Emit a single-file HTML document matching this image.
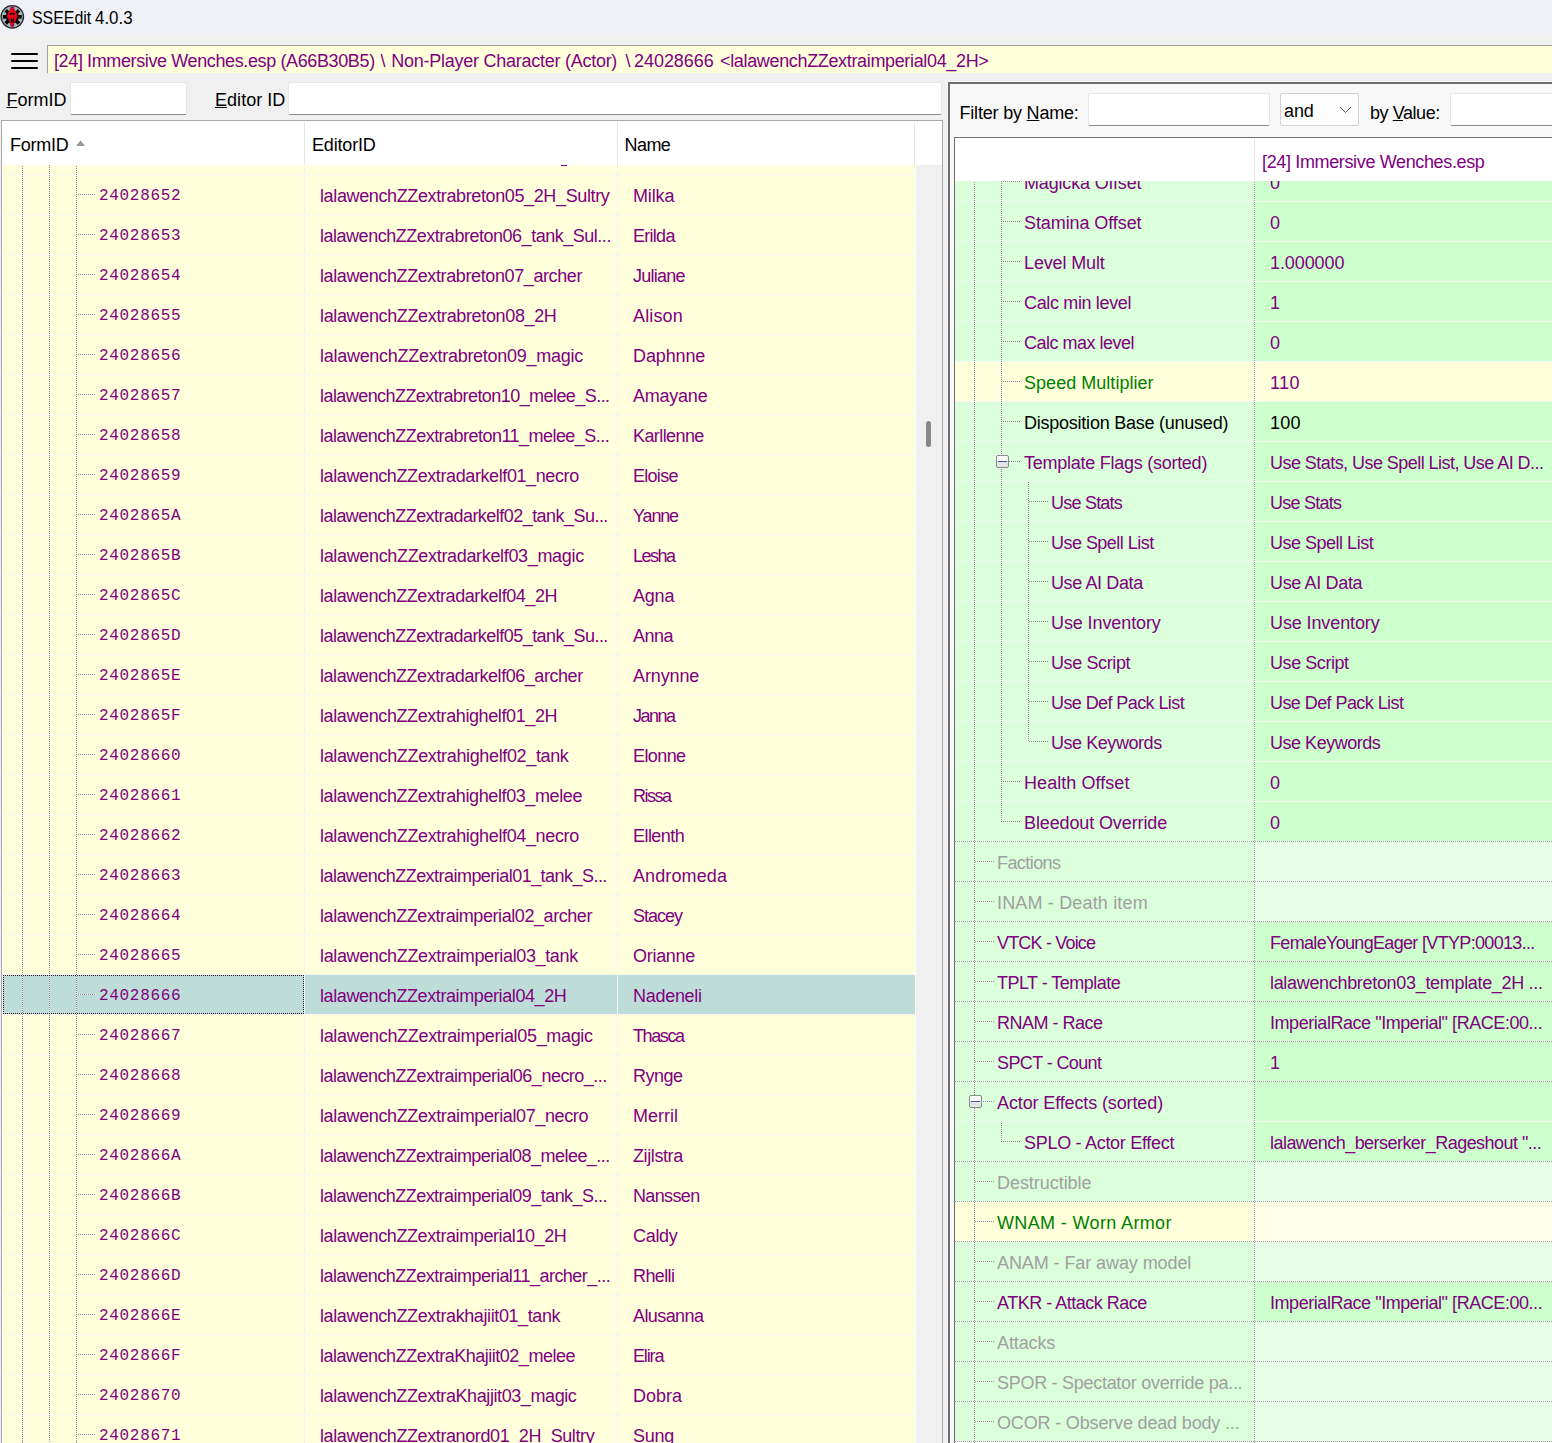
<!DOCTYPE html><html><head><meta charset="utf-8"><style>
html,body{margin:0;padding:0;}
body{width:1552px;height:1443px;overflow:hidden;position:relative;background:#f0f0f0;font-family:'Liberation Sans', sans-serif;}
.t{position:absolute;white-space:pre;line-height:20px;height:20px;}
.t u{text-decoration:underline;text-underline-offset:1px;text-decoration-thickness:1px;}
.vd{position:absolute;width:1px;background-image:linear-gradient(to bottom,var(--c) 50%,#fff 50%);background-size:1px 2px;}
.hd{position:absolute;height:1px;background-image:linear-gradient(to right,var(--c) 50%,#fff 50%);background-size:2px 1px;}
.clip{position:absolute;overflow:hidden;}
</style></head><body>
<div style="position:absolute;left:0px;top:0px;width:1552px;height:34px;background:#f0f1f7;"></div>
<svg style="position:absolute;left:0;top:0" width="30" height="34" viewBox="0 0 30 34">
<circle cx="12.3" cy="16.8" r="11.2" fill="#a4b5b9" stroke="#262626" stroke-width="1.3"/>
<g fill="#000" transform="translate(12.3 16.8)">
<circle r="6.6"/>
<rect x="-1.8" y="-9.4" width="3.6" height="18.8"/>
<rect x="-9.4" y="-1.8" width="18.8" height="3.6"/>
<rect x="-1.8" y="-9.4" width="3.6" height="18.8" transform="rotate(45)"/>
<rect x="-1.8" y="-9.4" width="3.6" height="18.8" transform="rotate(-45)"/>
</g>
<path d="M12.3 5.6 L14.6 9.5 L16.8 13.5 L17.6 16.5 L15.6 20.5 L13.8 24.5 L12.3 28.4 L10.8 24.5 L9 20.5 L7 16.5 L7.8 13.5 L10 9.5 Z" fill="#f0001a"/>
<path d="M12.3 5.6 L14.6 9.5 L13.2 9.8 L12.3 7.6 L11.4 9.8 L10 9.5 Z M10.8 24.5 L13.8 24.5 L12.3 28.4 Z" fill="#b0104a"/>
<path d="M9.5 14.2 Q11 11.8 12.3 13.6 Q13.6 11.8 15.1 14.2 L13.6 14.8 L12.3 14 L11 14.8 Z M10.2 18.6 L11.8 18.4 L12.3 22.5 L12.8 18.4 L14.4 18.6 L13.2 22.8 L11.4 22.8 Z" fill="#000"/>
</svg>
<div class="t" style="left:32px;top:8.30px;color:#000000;font-size:18px;transform:scaleX(0.8836);transform-origin:0 0;">SSEEdit</div>
<div class="t" style="left:94.5px;top:8.30px;color:#000000;font-size:18px;transform:scaleX(0.9400);transform-origin:0 0;">4.0.3</div>
<div style="position:absolute;left:11px;top:53px;width:27px;height:2px;background:#000;border-radius:1px;"></div>
<div style="position:absolute;left:11px;top:60px;width:27px;height:2px;background:#000;border-radius:1px;"></div>
<div style="position:absolute;left:11px;top:67px;width:27px;height:2px;background:#000;border-radius:1px;"></div>
<div style="position:absolute;left:47px;top:45px;width:1505px;height:28px;background:#ffffdc;box-sizing:border-box;border-top:1px solid #a0a0a0;border-left:1px solid #a0a0a0;"></div>
<div class="t" style="left:54px;top:50.70px;color:#800080;font-size:18px;letter-spacing:-0.38055555555555526px;font-family:'Liberation Sans', sans-serif;">[24] Immersive Wenches.esp (A66B30B5)</div>
<div class="t" style="left:380.5px;top:50.70px;color:#800080;font-size:18px;letter-spacing:0px;font-family:'Liberation Sans', sans-serif;">\</div>
<div class="t" style="left:391.3px;top:50.70px;color:#800080;font-size:18px;letter-spacing:-0.25925925925925924px;font-family:'Liberation Sans', sans-serif;">Non-Player Character (Actor)</div>
<div class="t" style="left:625.5px;top:50.70px;color:#800080;font-size:18px;letter-spacing:0px;font-family:'Liberation Sans', sans-serif;">\</div>
<div class="t" style="left:634px;top:50.70px;color:#800080;font-size:18px;letter-spacing:-0.0428571428571526px;font-family:'Liberation Sans', sans-serif;">24028666</div>
<div class="t" style="left:720px;top:50.70px;color:#800080;font-size:18px;letter-spacing:-0.3433333333333356px;font-family:'Liberation Sans', sans-serif;">&lt;lalawenchZZextraimperial04_2H&gt;</div>
<div class="t" style="left:6.5px;top:90.20px;color:#000000;font-size:18px;letter-spacing:-0.020000000000001704px;font-family:'Liberation Sans', sans-serif;"><u>F</u>ormID</div>
<div style="position:absolute;left:70px;top:82px;width:117px;height:33px;background:#fff;box-sizing:border-box;border:1px solid #e6e6e6;border-bottom:1px solid #8a8a8a;border-radius:2px;"></div>
<div class="t" style="left:215px;top:90.20px;color:#000000;font-size:18px;letter-spacing:0.03750000000000142px;font-family:'Liberation Sans', sans-serif;"><u>E</u>ditor ID</div>
<div style="position:absolute;left:288px;top:82px;width:654px;height:33px;background:#fff;box-sizing:border-box;border:1px solid #e6e6e6;border-bottom:1px solid #8a8a8a;border-radius:2px;"></div>
<div style="position:absolute;left:1px;top:120px;width:942px;height:1333px;background:#fff;box-sizing:border-box;border:1px solid #a8a8b0;"></div>
<div style="position:absolute;left:304px;top:122px;width:1px;height:43px;background:#e5e5e5;"></div>
<div style="position:absolute;left:617px;top:122px;width:1px;height:43px;background:#e5e5e5;"></div>
<div style="position:absolute;left:914px;top:122px;width:1px;height:43px;background:#e5e5e5;"></div>
<div class="t" style="left:10px;top:134.70px;color:#000000;font-size:18px;letter-spacing:-0.24000000000000057px;font-family:'Liberation Sans', sans-serif;">FormID</div>
<svg style="position:absolute;left:76px;top:140px" width="10" height="6"><path d="M0 6 L4.5 0.5 L9 6 Z" fill="#999"/></svg>
<div class="t" style="left:312px;top:134.70px;color:#000000;font-size:18px;letter-spacing:-0.1714285714285698px;font-family:'Liberation Sans', sans-serif;">EditorID</div>
<div class="t" style="left:624.5px;top:134.70px;color:#000000;font-size:18px;letter-spacing:-0.5666666666666819px;font-family:'Liberation Sans', sans-serif;">Name</div>
<div style="position:absolute;left:916px;top:165px;width:26px;height:1278px;background:#f0f0f0;"></div>
<div style="position:absolute;left:926px;top:421px;width:5px;height:26px;background:#888;border-radius:3px;"></div>
<div class="clip" style="left:3px;top:165px;width:912px;height:1278px;">
<div style="position:absolute;left:-3px;top:-165px;width:1552px;height:1443px;">
<div style="position:absolute;left:3px;top:165px;width:912px;height:1278px;background:#ffffdc;"></div>
<div class="hd" style="left:3px;top:174px;width:912px;background-position:-1px 0;--c:#ebebeb"></div>
<div style="position:absolute;left:561px;top:164px;width:6px;height:2px;background:#800080;"></div>
<div class="hd" style="left:77px;top:154px;width:19px;background-position:-1px 0;--c:#888888"></div>
<div class="hd" style="left:3px;top:214px;width:912px;background-position:-1px 0;--c:#ebebeb"></div>
<div class="t" style="left:99px;top:186.40px;color:#800080;font-size:16px;letter-spacing:0.6857142857142874px;font-family:'Liberation Mono', monospace;">24028652</div>
<div class="t" style="left:320px;top:185.70px;color:#800080;font-size:18px;letter-spacing:-0.3757575757575785px;font-family:'Liberation Sans', sans-serif;">lalawenchZZextrabreton05_2H_Sultry</div>
<div class="t" style="left:633px;top:185.70px;color:#800080;font-size:18px;letter-spacing:-0.15000000000000568px;font-family:'Liberation Sans', sans-serif;">Milka</div>
<div class="hd" style="left:77px;top:194px;width:19px;background-position:-1px 0;--c:#888888"></div>
<div class="hd" style="left:3px;top:254px;width:912px;background-position:-1px 0;--c:#ebebeb"></div>
<div class="t" style="left:99px;top:226.40px;color:#800080;font-size:16px;letter-spacing:0.6857142857142874px;font-family:'Liberation Mono', monospace;">24028653</div>
<div class="t" style="left:320px;top:225.70px;color:#800080;font-size:18px;letter-spacing:-0.4800000000000019px;font-family:'Liberation Sans', sans-serif;">lalawenchZZextrabreton06_tank_Sul...</div>
<div class="t" style="left:633px;top:225.70px;color:#800080;font-size:18px;letter-spacing:-0.7200000000000045px;font-family:'Liberation Sans', sans-serif;">Erilda</div>
<div class="hd" style="left:77px;top:234px;width:19px;background-position:-1px 0;--c:#888888"></div>
<div class="hd" style="left:3px;top:294px;width:912px;background-position:-1px 0;--c:#ebebeb"></div>
<div class="t" style="left:99px;top:266.40px;color:#800080;font-size:16px;letter-spacing:0.6857142857142874px;font-family:'Liberation Mono', monospace;">24028654</div>
<div class="t" style="left:320px;top:265.70px;color:#800080;font-size:18px;letter-spacing:-0.3900000000000015px;font-family:'Liberation Sans', sans-serif;">lalawenchZZextrabreton07_archer</div>
<div class="t" style="left:633px;top:265.70px;color:#800080;font-size:18px;letter-spacing:-0.7666666666666705px;font-family:'Liberation Sans', sans-serif;">Juliane</div>
<div class="hd" style="left:77px;top:274px;width:19px;background-position:-1px 0;--c:#888888"></div>
<div class="hd" style="left:3px;top:334px;width:912px;background-position:-1px 0;--c:#ebebeb"></div>
<div class="t" style="left:99px;top:306.40px;color:#800080;font-size:16px;letter-spacing:0.6857142857142874px;font-family:'Liberation Mono', monospace;">24028655</div>
<div class="t" style="left:320px;top:305.70px;color:#800080;font-size:18px;letter-spacing:-0.3576923076923103px;font-family:'Liberation Sans', sans-serif;">lalawenchZZextrabreton08_2H</div>
<div class="t" style="left:633px;top:305.70px;color:#800080;font-size:18px;letter-spacing:0.13999999999998636px;font-family:'Liberation Sans', sans-serif;">Alison</div>
<div class="hd" style="left:77px;top:314px;width:19px;background-position:-1px 0;--c:#888888"></div>
<div class="hd" style="left:3px;top:374px;width:912px;background-position:-1px 0;--c:#ebebeb"></div>
<div class="t" style="left:99px;top:346.40px;color:#800080;font-size:16px;letter-spacing:0.6857142857142874px;font-family:'Liberation Mono', monospace;">24028656</div>
<div class="t" style="left:320px;top:345.70px;color:#800080;font-size:18px;letter-spacing:-0.27586206896551724px;font-family:'Liberation Sans', sans-serif;">lalawenchZZextrabreton09_magic</div>
<div class="t" style="left:633px;top:345.70px;color:#800080;font-size:18px;letter-spacing:-0.11666666666667425px;font-family:'Liberation Sans', sans-serif;">Daphnne</div>
<div class="hd" style="left:77px;top:354px;width:19px;background-position:-1px 0;--c:#888888"></div>
<div class="hd" style="left:3px;top:414px;width:912px;background-position:-1px 0;--c:#ebebeb"></div>
<div class="t" style="left:99px;top:386.40px;color:#800080;font-size:16px;letter-spacing:0.6857142857142874px;font-family:'Liberation Mono', monospace;">24028657</div>
<div class="t" style="left:320px;top:385.70px;color:#800080;font-size:18px;letter-spacing:-0.5617647058823536px;font-family:'Liberation Sans', sans-serif;">lalawenchZZextrabreton10_melee_S...</div>
<div class="t" style="left:633px;top:385.70px;color:#800080;font-size:18px;letter-spacing:-0.2333333333333485px;font-family:'Liberation Sans', sans-serif;">Amayane</div>
<div class="hd" style="left:77px;top:394px;width:19px;background-position:-1px 0;--c:#888888"></div>
<div class="hd" style="left:3px;top:454px;width:912px;background-position:-1px 0;--c:#ebebeb"></div>
<div class="t" style="left:99px;top:426.40px;color:#800080;font-size:16px;letter-spacing:0.6857142857142874px;font-family:'Liberation Mono', monospace;">24028658</div>
<div class="t" style="left:320px;top:425.70px;color:#800080;font-size:18px;letter-spacing:-0.5323529411764713px;font-family:'Liberation Sans', sans-serif;">lalawenchZZextrabreton11_melee_S...</div>
<div class="t" style="left:633px;top:425.70px;color:#800080;font-size:18px;letter-spacing:-0.5875000000000057px;font-family:'Liberation Sans', sans-serif;">Karllenne</div>
<div class="hd" style="left:77px;top:434px;width:19px;background-position:-1px 0;--c:#888888"></div>
<div class="hd" style="left:3px;top:494px;width:912px;background-position:-1px 0;--c:#ebebeb"></div>
<div class="t" style="left:99px;top:466.40px;color:#800080;font-size:16px;letter-spacing:0.6857142857142874px;font-family:'Liberation Mono', monospace;">24028659</div>
<div class="t" style="left:320px;top:465.70px;color:#800080;font-size:18px;letter-spacing:-0.4px;font-family:'Liberation Sans', sans-serif;">lalawenchZZextradarkelf01_necro</div>
<div class="t" style="left:633px;top:465.70px;color:#800080;font-size:18px;letter-spacing:-0.7200000000000045px;font-family:'Liberation Sans', sans-serif;">Eloise</div>
<div class="hd" style="left:77px;top:474px;width:19px;background-position:-1px 0;--c:#888888"></div>
<div class="hd" style="left:3px;top:534px;width:912px;background-position:-1px 0;--c:#ebebeb"></div>
<div class="t" style="left:99px;top:506.40px;color:#800080;font-size:16px;letter-spacing:0.6857142857142874px;font-family:'Liberation Mono', monospace;">2402865A</div>
<div class="t" style="left:320px;top:505.70px;color:#800080;font-size:18px;letter-spacing:-0.5371428571428591px;font-family:'Liberation Sans', sans-serif;">lalawenchZZextradarkelf02_tank_Su...</div>
<div class="t" style="left:633px;top:505.70px;color:#800080;font-size:18px;letter-spacing:-1.1500000000000057px;font-family:'Liberation Sans', sans-serif;">Yanne</div>
<div class="hd" style="left:77px;top:514px;width:19px;background-position:-1px 0;--c:#888888"></div>
<div class="hd" style="left:3px;top:574px;width:912px;background-position:-1px 0;--c:#ebebeb"></div>
<div class="t" style="left:99px;top:546.40px;color:#800080;font-size:16px;letter-spacing:0.6857142857142874px;font-family:'Liberation Mono', monospace;">2402865B</div>
<div class="t" style="left:320px;top:545.70px;color:#800080;font-size:18px;letter-spacing:-0.3333333333333333px;font-family:'Liberation Sans', sans-serif;">lalawenchZZextradarkelf03_magic</div>
<div class="t" style="left:633px;top:545.70px;color:#800080;font-size:18px;letter-spacing:-1.5px;font-family:'Liberation Sans', sans-serif;">Lesha</div>
<div class="hd" style="left:77px;top:554px;width:19px;background-position:-1px 0;--c:#888888"></div>
<div class="hd" style="left:3px;top:614px;width:912px;background-position:-1px 0;--c:#ebebeb"></div>
<div class="t" style="left:99px;top:586.40px;color:#800080;font-size:16px;letter-spacing:0.6857142857142874px;font-family:'Liberation Mono', monospace;">2402865C</div>
<div class="t" style="left:320px;top:585.70px;color:#800080;font-size:18px;letter-spacing:-0.42962962962963047px;font-family:'Liberation Sans', sans-serif;">lalawenchZZextradarkelf04_2H</div>
<div class="t" style="left:633px;top:585.70px;color:#800080;font-size:18px;letter-spacing:-0.2000000000000076px;font-family:'Liberation Sans', sans-serif;">Agna</div>
<div class="hd" style="left:77px;top:594px;width:19px;background-position:-1px 0;--c:#888888"></div>
<div class="hd" style="left:3px;top:654px;width:912px;background-position:-1px 0;--c:#ebebeb"></div>
<div class="t" style="left:99px;top:626.40px;color:#800080;font-size:16px;letter-spacing:0.6857142857142874px;font-family:'Liberation Mono', monospace;">2402865D</div>
<div class="t" style="left:320px;top:625.70px;color:#800080;font-size:18px;letter-spacing:-0.5371428571428591px;font-family:'Liberation Sans', sans-serif;">lalawenchZZextradarkelf05_tank_Su...</div>
<div class="t" style="left:633px;top:625.70px;color:#800080;font-size:18px;letter-spacing:-0.5333333333333409px;font-family:'Liberation Sans', sans-serif;">Anna</div>
<div class="hd" style="left:77px;top:634px;width:19px;background-position:-1px 0;--c:#888888"></div>
<div class="hd" style="left:3px;top:694px;width:912px;background-position:-1px 0;--c:#ebebeb"></div>
<div class="t" style="left:99px;top:666.40px;color:#800080;font-size:16px;letter-spacing:0.6857142857142874px;font-family:'Liberation Mono', monospace;">2402865E</div>
<div class="t" style="left:320px;top:665.70px;color:#800080;font-size:18px;letter-spacing:-0.45161290322580644px;font-family:'Liberation Sans', sans-serif;">lalawenchZZextradarkelf06_archer</div>
<div class="t" style="left:633px;top:665.70px;color:#800080;font-size:18px;letter-spacing:-0.11666666666667425px;font-family:'Liberation Sans', sans-serif;">Arnynne</div>
<div class="hd" style="left:77px;top:674px;width:19px;background-position:-1px 0;--c:#888888"></div>
<div class="hd" style="left:3px;top:734px;width:912px;background-position:-1px 0;--c:#ebebeb"></div>
<div class="t" style="left:99px;top:706.40px;color:#800080;font-size:16px;letter-spacing:0.6857142857142874px;font-family:'Liberation Mono', monospace;">2402865F</div>
<div class="t" style="left:320px;top:705.70px;color:#800080;font-size:18px;letter-spacing:-0.39259259259259344px;font-family:'Liberation Sans', sans-serif;">lalawenchZZextrahighelf01_2H</div>
<div class="t" style="left:633px;top:705.70px;color:#800080;font-size:18px;letter-spacing:-1.5px;font-family:'Liberation Sans', sans-serif;">Janna</div>
<div class="hd" style="left:77px;top:714px;width:19px;background-position:-1px 0;--c:#888888"></div>
<div class="hd" style="left:3px;top:774px;width:912px;background-position:-1px 0;--c:#ebebeb"></div>
<div class="t" style="left:99px;top:746.40px;color:#800080;font-size:16px;letter-spacing:0.6857142857142874px;font-family:'Liberation Mono', monospace;">24028660</div>
<div class="t" style="left:320px;top:745.70px;color:#800080;font-size:18px;letter-spacing:-0.3551724137931058px;font-family:'Liberation Sans', sans-serif;">lalawenchZZextrahighelf02_tank</div>
<div class="t" style="left:633px;top:745.70px;color:#800080;font-size:18px;letter-spacing:-0.6px;font-family:'Liberation Sans', sans-serif;">Elonne</div>
<div class="hd" style="left:77px;top:754px;width:19px;background-position:-1px 0;--c:#888888"></div>
<div class="hd" style="left:3px;top:814px;width:912px;background-position:-1px 0;--c:#ebebeb"></div>
<div class="t" style="left:99px;top:786.40px;color:#800080;font-size:16px;letter-spacing:0.6857142857142874px;font-family:'Liberation Mono', monospace;">24028661</div>
<div class="t" style="left:320px;top:785.70px;color:#800080;font-size:18px;letter-spacing:-0.3900000000000015px;font-family:'Liberation Sans', sans-serif;">lalawenchZZextrahighelf03_melee</div>
<div class="t" style="left:633px;top:785.70px;color:#800080;font-size:18px;letter-spacing:-1.4750000000000227px;font-family:'Liberation Sans', sans-serif;">Rissa</div>
<div class="hd" style="left:77px;top:794px;width:19px;background-position:-1px 0;--c:#888888"></div>
<div class="hd" style="left:3px;top:854px;width:912px;background-position:-1px 0;--c:#ebebeb"></div>
<div class="t" style="left:99px;top:826.40px;color:#800080;font-size:16px;letter-spacing:0.6857142857142874px;font-family:'Liberation Mono', monospace;">24028662</div>
<div class="t" style="left:320px;top:825.70px;color:#800080;font-size:18px;letter-spacing:-0.36666666666666664px;font-family:'Liberation Sans', sans-serif;">lalawenchZZextrahighelf04_necro</div>
<div class="t" style="left:633px;top:825.70px;color:#800080;font-size:18px;letter-spacing:-0.5500000000000114px;font-family:'Liberation Sans', sans-serif;">Ellenth</div>
<div class="hd" style="left:77px;top:834px;width:19px;background-position:-1px 0;--c:#888888"></div>
<div class="hd" style="left:3px;top:894px;width:912px;background-position:-1px 0;--c:#ebebeb"></div>
<div class="t" style="left:99px;top:866.40px;color:#800080;font-size:16px;letter-spacing:0.6857142857142874px;font-family:'Liberation Mono', monospace;">24028663</div>
<div class="t" style="left:320px;top:865.70px;color:#800080;font-size:18px;letter-spacing:-0.5371428571428591px;font-family:'Liberation Sans', sans-serif;">lalawenchZZextraimperial01_tank_S...</div>
<div class="t" style="left:633px;top:865.70px;color:#800080;font-size:18px;letter-spacing:0.11249999999999716px;font-family:'Liberation Sans', sans-serif;">Andromeda</div>
<div class="hd" style="left:77px;top:874px;width:19px;background-position:-1px 0;--c:#888888"></div>
<div class="hd" style="left:3px;top:934px;width:912px;background-position:-1px 0;--c:#ebebeb"></div>
<div class="t" style="left:99px;top:906.40px;color:#800080;font-size:16px;letter-spacing:0.6857142857142874px;font-family:'Liberation Mono', monospace;">24028664</div>
<div class="t" style="left:320px;top:905.70px;color:#800080;font-size:18px;letter-spacing:-0.4281250000000014px;font-family:'Liberation Sans', sans-serif;">lalawenchZZextraimperial02_archer</div>
<div class="t" style="left:633px;top:905.70px;color:#800080;font-size:18px;letter-spacing:-1.0px;font-family:'Liberation Sans', sans-serif;">Stacey</div>
<div class="hd" style="left:77px;top:914px;width:19px;background-position:-1px 0;--c:#888888"></div>
<div class="hd" style="left:3px;top:974px;width:912px;background-position:-1px 0;--c:#ebebeb"></div>
<div class="t" style="left:99px;top:946.40px;color:#800080;font-size:16px;letter-spacing:0.6857142857142874px;font-family:'Liberation Mono', monospace;">24028665</div>
<div class="t" style="left:320px;top:945.70px;color:#800080;font-size:18px;letter-spacing:-0.36666666666666664px;font-family:'Liberation Sans', sans-serif;">lalawenchZZextraimperial03_tank</div>
<div class="t" style="left:633px;top:945.70px;color:#800080;font-size:18px;letter-spacing:-0.28333333333334093px;font-family:'Liberation Sans', sans-serif;">Orianne</div>
<div class="hd" style="left:77px;top:954px;width:19px;background-position:-1px 0;--c:#888888"></div>
<div style="position:absolute;left:3px;top:975px;width:912px;height:39px;background:#bfddd8;"></div>
<div style="position:absolute;left:617px;top:975px;width:1px;height:39px;background:#fff;"></div>
<div class="hd" style="left:3px;top:1014px;width:912px;background-position:-1px 0;--c:#ebebeb"></div>
<div class="t" style="left:99px;top:986.40px;color:#800080;font-size:16px;letter-spacing:0.6857142857142874px;font-family:'Liberation Mono', monospace;">24028666</div>
<div class="t" style="left:320px;top:985.70px;color:#800080;font-size:18px;letter-spacing:-0.403571428571431px;font-family:'Liberation Sans', sans-serif;">lalawenchZZextraimperial04_2H</div>
<div class="t" style="left:633px;top:985.70px;color:#800080;font-size:18px;letter-spacing:-0.2857142857142857px;font-family:'Liberation Sans', sans-serif;">Nadeneli</div>
<div class="hd" style="left:77px;top:994px;width:19px;background-position:-1px 0;--c:#888888"></div>
<div class="hd" style="left:3px;top:1054px;width:912px;background-position:-1px 0;--c:#ebebeb"></div>
<div class="t" style="left:99px;top:1026.40px;color:#800080;font-size:16px;letter-spacing:0.6857142857142874px;font-family:'Liberation Mono', monospace;">24028667</div>
<div class="t" style="left:320px;top:1025.70px;color:#800080;font-size:18px;letter-spacing:-0.32580645161290395px;font-family:'Liberation Sans', sans-serif;">lalawenchZZextraimperial05_magic</div>
<div class="t" style="left:633px;top:1025.70px;color:#800080;font-size:18px;letter-spacing:-1.4px;font-family:'Liberation Sans', sans-serif;">Thasca</div>
<div class="hd" style="left:77px;top:1034px;width:19px;background-position:-1px 0;--c:#888888"></div>
<div class="hd" style="left:3px;top:1094px;width:912px;background-position:-1px 0;--c:#ebebeb"></div>
<div class="t" style="left:99px;top:1066.40px;color:#800080;font-size:16px;letter-spacing:0.6857142857142874px;font-family:'Liberation Mono', monospace;">24028668</div>
<div class="t" style="left:320px;top:1065.70px;color:#800080;font-size:18px;letter-spacing:-0.5085714285714306px;font-family:'Liberation Sans', sans-serif;">lalawenchZZextraimperial06_necro_...</div>
<div class="t" style="left:633px;top:1065.70px;color:#800080;font-size:18px;letter-spacing:-0.5px;font-family:'Liberation Sans', sans-serif;">Rynge</div>
<div class="hd" style="left:77px;top:1074px;width:19px;background-position:-1px 0;--c:#888888"></div>
<div class="hd" style="left:3px;top:1134px;width:912px;background-position:-1px 0;--c:#ebebeb"></div>
<div class="t" style="left:99px;top:1106.40px;color:#800080;font-size:16px;letter-spacing:0.6857142857142874px;font-family:'Liberation Mono', monospace;">24028669</div>
<div class="t" style="left:320px;top:1105.70px;color:#800080;font-size:18px;letter-spacing:-0.37741935483871114px;font-family:'Liberation Sans', sans-serif;">lalawenchZZextraimperial07_necro</div>
<div class="t" style="left:633px;top:1105.70px;color:#800080;font-size:18px;letter-spacing:0.0px;font-family:'Liberation Sans', sans-serif;">Merril</div>
<div class="hd" style="left:77px;top:1114px;width:19px;background-position:-1px 0;--c:#888888"></div>
<div class="hd" style="left:3px;top:1174px;width:912px;background-position:-1px 0;--c:#ebebeb"></div>
<div class="t" style="left:99px;top:1146.40px;color:#800080;font-size:16px;letter-spacing:0.6857142857142874px;font-family:'Liberation Mono', monospace;">2402866A</div>
<div class="t" style="left:320px;top:1145.70px;color:#800080;font-size:18px;letter-spacing:-0.5400000000000026px;font-family:'Liberation Sans', sans-serif;">lalawenchZZextraimperial08_melee_...</div>
<div class="t" style="left:633px;top:1145.70px;color:#800080;font-size:18px;letter-spacing:-0.40000000000000974px;font-family:'Liberation Sans', sans-serif;">Zijlstra</div>
<div class="hd" style="left:77px;top:1154px;width:19px;background-position:-1px 0;--c:#888888"></div>
<div class="hd" style="left:3px;top:1214px;width:912px;background-position:-1px 0;--c:#ebebeb"></div>
<div class="t" style="left:99px;top:1186.40px;color:#800080;font-size:16px;letter-spacing:0.6857142857142874px;font-family:'Liberation Mono', monospace;">2402866B</div>
<div class="t" style="left:320px;top:1185.70px;color:#800080;font-size:18px;letter-spacing:-0.5342857142857156px;font-family:'Liberation Sans', sans-serif;">lalawenchZZextraimperial09_tank_S...</div>
<div class="t" style="left:633px;top:1185.70px;color:#800080;font-size:18px;letter-spacing:-0.6333333333333447px;font-family:'Liberation Sans', sans-serif;">Nanssen</div>
<div class="hd" style="left:77px;top:1194px;width:19px;background-position:-1px 0;--c:#888888"></div>
<div class="hd" style="left:3px;top:1254px;width:912px;background-position:-1px 0;--c:#ebebeb"></div>
<div class="t" style="left:99px;top:1226.40px;color:#800080;font-size:16px;letter-spacing:0.6857142857142874px;font-family:'Liberation Mono', monospace;">2402866C</div>
<div class="t" style="left:320px;top:1225.70px;color:#800080;font-size:18px;letter-spacing:-0.403571428571431px;font-family:'Liberation Sans', sans-serif;">lalawenchZZextraimperial10_2H</div>
<div class="t" style="left:633px;top:1225.70px;color:#800080;font-size:18px;letter-spacing:-0.30000000000001137px;font-family:'Liberation Sans', sans-serif;">Caldy</div>
<div class="hd" style="left:77px;top:1234px;width:19px;background-position:-1px 0;--c:#888888"></div>
<div class="hd" style="left:3px;top:1294px;width:912px;background-position:-1px 0;--c:#ebebeb"></div>
<div class="t" style="left:99px;top:1266.40px;color:#800080;font-size:16px;letter-spacing:0.6857142857142874px;font-family:'Liberation Mono', monospace;">2402866D</div>
<div class="t" style="left:320px;top:1265.70px;color:#800080;font-size:18px;letter-spacing:-0.5305555555555562px;font-family:'Liberation Sans', sans-serif;">lalawenchZZextraimperial11_archer_...</div>
<div class="t" style="left:633px;top:1265.70px;color:#800080;font-size:18px;letter-spacing:-0.6px;font-family:'Liberation Sans', sans-serif;">Rhelli</div>
<div class="hd" style="left:77px;top:1274px;width:19px;background-position:-1px 0;--c:#888888"></div>
<div class="hd" style="left:3px;top:1334px;width:912px;background-position:-1px 0;--c:#ebebeb"></div>
<div class="t" style="left:99px;top:1306.40px;color:#800080;font-size:16px;letter-spacing:0.6857142857142874px;font-family:'Liberation Mono', monospace;">2402866E</div>
<div class="t" style="left:320px;top:1305.70px;color:#800080;font-size:18px;letter-spacing:-0.4000000000000008px;font-family:'Liberation Sans', sans-serif;">lalawenchZZextrakhajiit01_tank</div>
<div class="t" style="left:633px;top:1305.70px;color:#800080;font-size:18px;letter-spacing:-0.585714285714289px;font-family:'Liberation Sans', sans-serif;">Alusanna</div>
<div class="hd" style="left:77px;top:1314px;width:19px;background-position:-1px 0;--c:#888888"></div>
<div class="hd" style="left:3px;top:1374px;width:912px;background-position:-1px 0;--c:#ebebeb"></div>
<div class="t" style="left:99px;top:1346.40px;color:#800080;font-size:16px;letter-spacing:0.6857142857142874px;font-family:'Liberation Mono', monospace;">2402866F</div>
<div class="t" style="left:320px;top:1345.70px;color:#800080;font-size:18px;letter-spacing:-0.4900000000000015px;font-family:'Liberation Sans', sans-serif;">lalawenchZZextraKhajiit02_melee</div>
<div class="t" style="left:633px;top:1345.70px;color:#800080;font-size:18px;letter-spacing:-1.1500000000000057px;font-family:'Liberation Sans', sans-serif;">Elira</div>
<div class="hd" style="left:77px;top:1354px;width:19px;background-position:-1px 0;--c:#888888"></div>
<div class="hd" style="left:3px;top:1414px;width:912px;background-position:-1px 0;--c:#ebebeb"></div>
<div class="t" style="left:99px;top:1386.40px;color:#800080;font-size:16px;letter-spacing:0.6857142857142874px;font-family:'Liberation Mono', monospace;">24028670</div>
<div class="t" style="left:320px;top:1385.70px;color:#800080;font-size:18px;letter-spacing:-0.41000000000000225px;font-family:'Liberation Sans', sans-serif;">lalawenchZZextraKhajjit03_magic</div>
<div class="t" style="left:633px;top:1385.70px;color:#800080;font-size:18px;letter-spacing:0.024999999999977263px;font-family:'Liberation Sans', sans-serif;">Dobra</div>
<div class="hd" style="left:77px;top:1394px;width:19px;background-position:-1px 0;--c:#888888"></div>
<div class="hd" style="left:3px;top:1454px;width:912px;background-position:-1px 0;--c:#ebebeb"></div>
<div class="t" style="left:99px;top:1426.40px;color:#800080;font-size:16px;letter-spacing:0.6857142857142874px;font-family:'Liberation Mono', monospace;">24028671</div>
<div class="t" style="left:320px;top:1425.70px;color:#800080;font-size:18px;letter-spacing:-0.4032258064516129px;font-family:'Liberation Sans', sans-serif;">lalawenchZZextranord01_2H_Sultry</div>
<div class="t" style="left:633px;top:1425.70px;color:#800080;font-size:18px;letter-spacing:-0.3000000000000303px;font-family:'Liberation Sans', sans-serif;">Sung</div>
<div class="hd" style="left:77px;top:1434px;width:19px;background-position:-1px 0;--c:#888888"></div>
<div class="vd" style="left:304px;top:165px;height:1278px;background-position:0 -1px;--c:#ebebeb"></div>
<div class="vd" style="left:617px;top:165px;height:1278px;background-position:0 0px;--c:#ebebeb"></div>
<div class="vd" style="left:22px;top:165px;height:1278px;background-position:0 -1px;--c:#888888"></div>
<div class="vd" style="left:49px;top:165px;height:1278px;background-position:0 0px;--c:#888888"></div>
<div class="vd" style="left:76px;top:165px;height:1278px;background-position:0 -1px;--c:#888888"></div>
<div style="position:absolute;left:3px;top:975px;width:301px;height:39px;box-sizing:border-box;border:1px dotted #301818;"></div>
</div></div>
<div style="position:absolute;left:948px;top:82px;width:614px;height:1371px;background:#f8f8f8;box-shadow:-1px -1px 0 #f8f8f8;box-sizing:border-box;border-top:2px solid #6e6e6e;border-left:2px solid #6e6e6e;"></div>
<div class="t" style="left:959.5px;top:102.70px;color:#000000;font-size:18px;letter-spacing:-0.1928571428571461px;font-family:'Liberation Sans', sans-serif;">Filter by <u>N</u>ame:</div>
<div style="position:absolute;left:1088px;top:93px;width:182px;height:33px;background:#fff;box-sizing:border-box;border:1px solid #e6e6e6;border-bottom:1px solid #8a8a8a;border-radius:2px;"></div>
<div style="position:absolute;left:1280px;top:93px;width:79px;height:33px;background:#fdfdfd;box-sizing:border-box;border:1px solid #d0d0d0;border-radius:2px;"></div>
<div class="t" style="left:1284px;top:100.70px;color:#000000;font-size:18px;letter-spacing:-0.10000000000002274px;font-family:'Liberation Sans', sans-serif;">and</div>
<svg style="position:absolute;left:1339px;top:106px" width="13" height="8"><path d="M1 1 L6.5 6.5 L12 1" fill="none" stroke="#505050" stroke-width="1"/></svg>
<div class="t" style="left:1370px;top:102.70px;color:#000000;font-size:18px;letter-spacing:-0.4375px;font-family:'Liberation Sans', sans-serif;">by <u>V</u>alue:</div>
<div style="position:absolute;left:1450px;top:93px;width:112px;height:33px;background:#fff;box-sizing:border-box;border:1px solid #e6e6e6;border-bottom:1px solid #8a8a8a;border-radius:2px;"></div>
<div style="position:absolute;left:954px;top:137px;width:608px;height:1316px;background:#fff;box-sizing:border-box;border-top:1px solid #6e6e6e;border-left:1px solid #6e6e6e;"></div>
<div style="position:absolute;left:1254px;top:139px;width:1px;height:42px;background:#e5e5e5;"></div>
<div class="t" style="left:1262px;top:151.70px;color:#800080;font-size:18px;letter-spacing:-0.35600000000000365px;font-family:'Liberation Sans', sans-serif;">[24] Immersive Wenches.esp</div>
<div class="clip" style="left:955px;top:181px;width:597px;height:1262px;">
<div style="position:absolute;left:-955px;top:-181px;width:1552px;height:1443px;">
<div style="position:absolute;left:955px;top:162px;width:299px;height:40px;background:#daffda;"></div>
<div style="position:absolute;left:1255px;top:162px;width:297px;height:40px;background:#ccffcc;"></div>
<div class="t" style="left:1024px;top:172.70px;color:#800080;font-size:18px;letter-spacing:-0.16923076923077274px;font-family:'Liberation Sans', sans-serif;">Magicka Offset</div>
<div class="t" style="left:1270px;top:172.70px;color:#800080;font-size:18px;letter-spacing:-0.33px;font-family:'Liberation Sans', sans-serif;">0</div>
<div style="position:absolute;left:955px;top:202px;width:299px;height:40px;background:#daffda;"></div>
<div style="position:absolute;left:1255px;top:202px;width:297px;height:40px;background:#ccffcc;"></div>
<div class="t" style="left:1024px;top:212.70px;color:#800080;font-size:18px;letter-spacing:-0.08461538461539511px;font-family:'Liberation Sans', sans-serif;">Stamina Offset</div>
<div class="t" style="left:1270px;top:212.70px;color:#800080;font-size:18px;letter-spacing:-0.33px;font-family:'Liberation Sans', sans-serif;">0</div>
<div style="position:absolute;left:955px;top:242px;width:299px;height:40px;background:#daffda;"></div>
<div style="position:absolute;left:1255px;top:242px;width:297px;height:40px;background:#ccffcc;"></div>
<div class="t" style="left:1024px;top:252.70px;color:#800080;font-size:18px;letter-spacing:-0.13333333333333838px;font-family:'Liberation Sans', sans-serif;">Level Mult</div>
<div class="t" style="left:1270px;top:252.70px;color:#800080;font-size:18px;letter-spacing:-0.0857142857143052px;font-family:'Liberation Sans', sans-serif;">1.000000</div>
<div style="position:absolute;left:955px;top:282px;width:299px;height:40px;background:#daffda;"></div>
<div style="position:absolute;left:1255px;top:282px;width:297px;height:40px;background:#ccffcc;"></div>
<div class="t" style="left:1024px;top:292.70px;color:#800080;font-size:18px;letter-spacing:-0.35384615384616436px;font-family:'Liberation Sans', sans-serif;">Calc min level</div>
<div class="t" style="left:1270px;top:292.70px;color:#800080;font-size:18px;letter-spacing:-0.33px;font-family:'Liberation Sans', sans-serif;">1</div>
<div style="position:absolute;left:955px;top:322px;width:299px;height:40px;background:#daffda;"></div>
<div style="position:absolute;left:1255px;top:322px;width:297px;height:40px;background:#ccffcc;"></div>
<div class="t" style="left:1024px;top:332.70px;color:#800080;font-size:18px;letter-spacing:-0.5076923076923182px;font-family:'Liberation Sans', sans-serif;">Calc max level</div>
<div class="t" style="left:1270px;top:332.70px;color:#800080;font-size:18px;letter-spacing:-0.33px;font-family:'Liberation Sans', sans-serif;">0</div>
<div style="position:absolute;left:955px;top:362px;width:299px;height:40px;background:#ffffdc;"></div>
<div style="position:absolute;left:1255px;top:362px;width:297px;height:40px;background:#ffffdc;"></div>
<div class="t" style="left:1024px;top:372.70px;color:#008000;font-size:18px;letter-spacing:0.03333333333333333px;font-family:'Liberation Sans', sans-serif;">Speed Multiplier</div>
<div class="t" style="left:1270px;top:372.70px;color:#800080;font-size:18px;letter-spacing:0.35000000000002274px;font-family:'Liberation Sans', sans-serif;">110</div>
<div style="position:absolute;left:955px;top:402px;width:299px;height:40px;background:#daffda;"></div>
<div style="position:absolute;left:1255px;top:402px;width:297px;height:40px;background:#ccffcc;"></div>
<div class="t" style="left:1024px;top:412.70px;color:#000000;font-size:18px;letter-spacing:-0.2375000000000019px;font-family:'Liberation Sans', sans-serif;">Disposition Base (unused)</div>
<div class="t" style="left:1270px;top:412.70px;color:#000000;font-size:18px;letter-spacing:0.1999999999999318px;font-family:'Liberation Sans', sans-serif;">100</div>
<div style="position:absolute;left:955px;top:442px;width:299px;height:40px;background:#daffda;"></div>
<div style="position:absolute;left:1255px;top:442px;width:297px;height:40px;background:#ccffcc;"></div>
<div class="t" style="left:1024px;top:452.70px;color:#800080;font-size:18px;letter-spacing:-0.25909090909091115px;font-family:'Liberation Sans', sans-serif;">Template Flags (sorted)</div>
<div class="t" style="left:1270px;top:452.70px;color:#800080;font-size:18px;letter-spacing:-0.5459459459459471px;font-family:'Liberation Sans', sans-serif;">Use Stats, Use Spell List, Use AI D...</div>
<div style="position:absolute;left:955px;top:482px;width:299px;height:40px;background:#daffda;"></div>
<div style="position:absolute;left:1255px;top:482px;width:297px;height:40px;background:#ccffcc;"></div>
<div class="t" style="left:1051px;top:492.70px;color:#800080;font-size:18px;letter-spacing:-0.7750000000000057px;font-family:'Liberation Sans', sans-serif;">Use Stats</div>
<div class="t" style="left:1270px;top:492.70px;color:#800080;font-size:18px;letter-spacing:-0.762500000000017px;font-family:'Liberation Sans', sans-serif;">Use Stats</div>
<div style="position:absolute;left:955px;top:522px;width:299px;height:40px;background:#daffda;"></div>
<div style="position:absolute;left:1255px;top:522px;width:297px;height:40px;background:#ccffcc;"></div>
<div class="t" style="left:1051px;top:532.70px;color:#800080;font-size:18px;letter-spacing:-0.5307692307692378px;font-family:'Liberation Sans', sans-serif;">Use Spell List</div>
<div class="t" style="left:1270px;top:532.70px;color:#800080;font-size:18px;letter-spacing:-0.49230769230769933px;font-family:'Liberation Sans', sans-serif;">Use Spell List</div>
<div style="position:absolute;left:955px;top:562px;width:299px;height:40px;background:#daffda;"></div>
<div style="position:absolute;left:1255px;top:562px;width:297px;height:40px;background:#ccffcc;"></div>
<div class="t" style="left:1051px;top:572.70px;color:#800080;font-size:18px;letter-spacing:-0.3900000000000091px;font-family:'Liberation Sans', sans-serif;">Use AI Data</div>
<div class="t" style="left:1270px;top:572.70px;color:#800080;font-size:18px;letter-spacing:-0.35px;font-family:'Liberation Sans', sans-serif;">Use AI Data</div>
<div style="position:absolute;left:955px;top:602px;width:299px;height:40px;background:#daffda;"></div>
<div style="position:absolute;left:1255px;top:602px;width:297px;height:40px;background:#ccffcc;"></div>
<div class="t" style="left:1051px;top:612.70px;color:#800080;font-size:18px;letter-spacing:-0.1000000000000038px;font-family:'Liberation Sans', sans-serif;">Use Inventory</div>
<div class="t" style="left:1270px;top:612.70px;color:#800080;font-size:18px;letter-spacing:-0.10833333333332955px;font-family:'Liberation Sans', sans-serif;">Use Inventory</div>
<div style="position:absolute;left:955px;top:642px;width:299px;height:40px;background:#daffda;"></div>
<div style="position:absolute;left:1255px;top:642px;width:297px;height:40px;background:#ccffcc;"></div>
<div class="t" style="left:1051px;top:652.70px;color:#800080;font-size:18px;letter-spacing:-0.3888888888888889px;font-family:'Liberation Sans', sans-serif;">Use Script</div>
<div class="t" style="left:1270px;top:652.70px;color:#800080;font-size:18px;letter-spacing:-0.43333333333334345px;font-family:'Liberation Sans', sans-serif;">Use Script</div>
<div style="position:absolute;left:955px;top:682px;width:299px;height:40px;background:#daffda;"></div>
<div style="position:absolute;left:1255px;top:682px;width:297px;height:40px;background:#ccffcc;"></div>
<div class="t" style="left:1051px;top:692.70px;color:#800080;font-size:18px;letter-spacing:-0.5875000000000057px;font-family:'Liberation Sans', sans-serif;">Use Def Pack List</div>
<div class="t" style="left:1270px;top:692.70px;color:#800080;font-size:18px;letter-spacing:-0.5687500000000085px;font-family:'Liberation Sans', sans-serif;">Use Def Pack List</div>
<div style="position:absolute;left:955px;top:722px;width:299px;height:40px;background:#daffda;"></div>
<div style="position:absolute;left:1255px;top:722px;width:297px;height:40px;background:#ccffcc;"></div>
<div class="t" style="left:1051px;top:732.70px;color:#800080;font-size:18px;letter-spacing:-0.4454545454545537px;font-family:'Liberation Sans', sans-serif;">Use Keywords</div>
<div class="t" style="left:1270px;top:732.70px;color:#800080;font-size:18px;letter-spacing:-0.4727272727272769px;font-family:'Liberation Sans', sans-serif;">Use Keywords</div>
<div style="position:absolute;left:955px;top:762px;width:299px;height:40px;background:#daffda;"></div>
<div style="position:absolute;left:1255px;top:762px;width:297px;height:40px;background:#ccffcc;"></div>
<div class="t" style="left:1024px;top:772.70px;color:#800080;font-size:18px;letter-spacing:0.05833333333333712px;font-family:'Liberation Sans', sans-serif;">Health Offset</div>
<div class="t" style="left:1270px;top:772.70px;color:#800080;font-size:18px;letter-spacing:-0.33px;font-family:'Liberation Sans', sans-serif;">0</div>
<div style="position:absolute;left:955px;top:802px;width:299px;height:40px;background:#daffda;"></div>
<div style="position:absolute;left:1255px;top:802px;width:297px;height:40px;background:#ccffcc;"></div>
<div class="t" style="left:1024px;top:812.70px;color:#800080;font-size:18px;letter-spacing:-0.11875000000000568px;font-family:'Liberation Sans', sans-serif;">Bleedout Override</div>
<div class="t" style="left:1270px;top:812.70px;color:#800080;font-size:18px;letter-spacing:-0.33px;font-family:'Liberation Sans', sans-serif;">0</div>
<div style="position:absolute;left:955px;top:842px;width:299px;height:40px;background:#daffda;"></div>
<div style="position:absolute;left:1255px;top:842px;width:297px;height:40px;background:#e6ffe6;"></div>
<div class="t" style="left:997px;top:852.70px;color:#a0a0a0;font-size:18px;letter-spacing:-0.5714285714285714px;font-family:'Liberation Sans', sans-serif;">Factions</div>
<div style="position:absolute;left:955px;top:882px;width:299px;height:40px;background:#daffda;"></div>
<div style="position:absolute;left:1255px;top:882px;width:297px;height:40px;background:#e6ffe6;"></div>
<div class="t" style="left:997px;top:892.70px;color:#a0a0a0;font-size:18px;letter-spacing:0.16249999999999432px;font-family:'Liberation Sans', sans-serif;">INAM - Death item</div>
<div style="position:absolute;left:955px;top:922px;width:299px;height:40px;background:#daffda;"></div>
<div style="position:absolute;left:1255px;top:922px;width:297px;height:40px;background:#ccffcc;"></div>
<div class="t" style="left:997px;top:932.70px;color:#800080;font-size:18px;letter-spacing:-0.8181818181818182px;font-family:'Liberation Sans', sans-serif;">VTCK - Voice</div>
<div class="t" style="left:1270px;top:932.70px;color:#800080;font-size:18px;letter-spacing:-0.6733333333333349px;font-family:'Liberation Sans', sans-serif;">FemaleYoungEager [VTYP:00013...</div>
<div style="position:absolute;left:955px;top:962px;width:299px;height:40px;background:#daffda;"></div>
<div style="position:absolute;left:1255px;top:962px;width:297px;height:40px;background:#ccffcc;"></div>
<div class="t" style="left:997px;top:972.70px;color:#800080;font-size:18px;letter-spacing:-0.528571428571435px;font-family:'Liberation Sans', sans-serif;">TPLT - Template</div>
<div class="t" style="left:1270px;top:972.70px;color:#800080;font-size:18px;letter-spacing:-0.3187500000000014px;font-family:'Liberation Sans', sans-serif;">lalawenchbreton03_template_2H ...</div>
<div style="position:absolute;left:955px;top:1002px;width:299px;height:40px;background:#daffda;"></div>
<div style="position:absolute;left:1255px;top:1002px;width:297px;height:40px;background:#ccffcc;"></div>
<div class="t" style="left:997px;top:1012.70px;color:#800080;font-size:18px;letter-spacing:-0.4900000000000091px;font-family:'Liberation Sans', sans-serif;">RNAM - Race</div>
<div class="t" style="left:1270px;top:1012.70px;color:#800080;font-size:18px;letter-spacing:-0.4470588235294131px;font-family:'Liberation Sans', sans-serif;">ImperialRace "Imperial" [RACE:00...</div>
<div style="position:absolute;left:955px;top:1042px;width:299px;height:40px;background:#daffda;"></div>
<div style="position:absolute;left:1255px;top:1042px;width:297px;height:40px;background:#ccffcc;"></div>
<div class="t" style="left:997px;top:1052.70px;color:#800080;font-size:18px;letter-spacing:-0.6090909090909132px;font-family:'Liberation Sans', sans-serif;">SPCT - Count</div>
<div class="t" style="left:1270px;top:1052.70px;color:#800080;font-size:18px;letter-spacing:-0.33px;font-family:'Liberation Sans', sans-serif;">1</div>
<div style="position:absolute;left:955px;top:1082px;width:299px;height:40px;background:#daffda;"></div>
<div style="position:absolute;left:1255px;top:1082px;width:297px;height:40px;background:#ccffcc;"></div>
<div class="t" style="left:997px;top:1092.70px;color:#800080;font-size:18px;letter-spacing:-0.12380952380953031px;font-family:'Liberation Sans', sans-serif;">Actor Effects (sorted)</div>
<div style="position:absolute;left:955px;top:1122px;width:299px;height:40px;background:#daffda;"></div>
<div style="position:absolute;left:1255px;top:1122px;width:297px;height:40px;background:#ccffcc;"></div>
<div class="t" style="left:1024px;top:1132.70px;color:#800080;font-size:18px;letter-spacing:-0.2944444444444419px;font-family:'Liberation Sans', sans-serif;">SPLO - Actor Effect</div>
<div class="t" style="left:1270px;top:1132.70px;color:#800080;font-size:18px;letter-spacing:-0.5424242424242451px;font-family:'Liberation Sans', sans-serif;">lalawench_berserker_Rageshout "...</div>
<div style="position:absolute;left:955px;top:1162px;width:299px;height:40px;background:#daffda;"></div>
<div style="position:absolute;left:1255px;top:1162px;width:297px;height:40px;background:#e6ffe6;"></div>
<div class="t" style="left:997px;top:1172.70px;color:#a0a0a0;font-size:18px;letter-spacing:-0.045454545454545456px;font-family:'Liberation Sans', sans-serif;">Destructible</div>
<div style="position:absolute;left:955px;top:1202px;width:299px;height:40px;background:#ffffdc;"></div>
<div style="position:absolute;left:1255px;top:1202px;width:297px;height:40px;background:#ffffe8;"></div>
<div class="t" style="left:997px;top:1212.70px;color:#008000;font-size:18px;letter-spacing:0.36249999999999716px;font-family:'Liberation Sans', sans-serif;">WNAM - Worn Armor</div>
<div style="position:absolute;left:955px;top:1242px;width:299px;height:40px;background:#daffda;"></div>
<div style="position:absolute;left:1255px;top:1242px;width:297px;height:40px;background:#e6ffe6;"></div>
<div class="t" style="left:997px;top:1252.70px;color:#a0a0a0;font-size:18px;letter-spacing:-0.08500000000000227px;font-family:'Liberation Sans', sans-serif;">ANAM - Far away model</div>
<div style="position:absolute;left:955px;top:1282px;width:299px;height:40px;background:#daffda;"></div>
<div style="position:absolute;left:1255px;top:1282px;width:297px;height:40px;background:#ccffcc;"></div>
<div class="t" style="left:997px;top:1292.70px;color:#800080;font-size:18px;letter-spacing:-0.4941176470588289px;font-family:'Liberation Sans', sans-serif;">ATKR - Attack Race</div>
<div class="t" style="left:1270px;top:1292.70px;color:#800080;font-size:18px;letter-spacing:-0.4470588235294131px;font-family:'Liberation Sans', sans-serif;">ImperialRace "Imperial" [RACE:00...</div>
<div style="position:absolute;left:955px;top:1322px;width:299px;height:40px;background:#daffda;"></div>
<div style="position:absolute;left:1255px;top:1322px;width:297px;height:40px;background:#e6ffe6;"></div>
<div class="t" style="left:997px;top:1332.70px;color:#a0a0a0;font-size:18px;letter-spacing:-0.11666666666667425px;font-family:'Liberation Sans', sans-serif;">Attacks</div>
<div style="position:absolute;left:955px;top:1362px;width:299px;height:40px;background:#daffda;"></div>
<div style="position:absolute;left:1255px;top:1362px;width:297px;height:40px;background:#e6ffe6;"></div>
<div class="t" style="left:997px;top:1372.70px;color:#a0a0a0;font-size:18px;letter-spacing:-0.2833333333333333px;font-family:'Liberation Sans', sans-serif;">SPOR - Spectator override pa...</div>
<div style="position:absolute;left:955px;top:1402px;width:299px;height:40px;background:#daffda;"></div>
<div style="position:absolute;left:1255px;top:1402px;width:297px;height:40px;background:#e6ffe6;"></div>
<div class="t" style="left:997px;top:1412.70px;color:#a0a0a0;font-size:18px;letter-spacing:-0.16296296296296633px;font-family:'Liberation Sans', sans-serif;">OCOR - Observe dead body ...</div>
<div class="hd" style="left:955px;top:161px;width:597px;background-position:0px 0;--c:#ececec"></div>
<div class="hd" style="left:955px;top:201px;width:597px;background-position:0px 0;--c:#ececec"></div>
<div class="hd" style="left:955px;top:241px;width:597px;background-position:0px 0;--c:#ececec"></div>
<div class="hd" style="left:955px;top:281px;width:597px;background-position:0px 0;--c:#ececec"></div>
<div class="hd" style="left:955px;top:321px;width:597px;background-position:0px 0;--c:#ececec"></div>
<div class="hd" style="left:955px;top:361px;width:597px;background-position:0px 0;--c:#ececec"></div>
<div class="hd" style="left:955px;top:401px;width:597px;background-position:0px 0;--c:#ececec"></div>
<div class="hd" style="left:955px;top:441px;width:597px;background-position:0px 0;--c:#ececec"></div>
<div class="hd" style="left:955px;top:481px;width:597px;background-position:0px 0;--c:#ececec"></div>
<div class="hd" style="left:955px;top:521px;width:597px;background-position:0px 0;--c:#ececec"></div>
<div class="hd" style="left:955px;top:561px;width:597px;background-position:0px 0;--c:#ececec"></div>
<div class="hd" style="left:955px;top:601px;width:597px;background-position:0px 0;--c:#ececec"></div>
<div class="hd" style="left:955px;top:641px;width:597px;background-position:0px 0;--c:#ececec"></div>
<div class="hd" style="left:955px;top:681px;width:597px;background-position:0px 0;--c:#ececec"></div>
<div class="hd" style="left:955px;top:721px;width:597px;background-position:0px 0;--c:#ececec"></div>
<div class="hd" style="left:955px;top:761px;width:597px;background-position:0px 0;--c:#ececec"></div>
<div class="hd" style="left:955px;top:801px;width:597px;background-position:0px 0;--c:#ececec"></div>
<div class="hd" style="left:955px;top:841px;width:597px;background-position:0px 0;--c:#a0a0a0"></div>
<div class="hd" style="left:955px;top:881px;width:597px;background-position:0px 0;--c:#a0a0a0"></div>
<div class="hd" style="left:955px;top:921px;width:597px;background-position:0px 0;--c:#a0a0a0"></div>
<div class="hd" style="left:955px;top:961px;width:597px;background-position:0px 0;--c:#a0a0a0"></div>
<div class="hd" style="left:955px;top:1001px;width:597px;background-position:0px 0;--c:#a0a0a0"></div>
<div class="hd" style="left:955px;top:1041px;width:597px;background-position:0px 0;--c:#a0a0a0"></div>
<div class="hd" style="left:955px;top:1081px;width:597px;background-position:0px 0;--c:#a0a0a0"></div>
<div class="hd" style="left:955px;top:1121px;width:597px;background-position:0px 0;--c:#ececec"></div>
<div class="hd" style="left:955px;top:1161px;width:597px;background-position:0px 0;--c:#a0a0a0"></div>
<div class="hd" style="left:955px;top:1201px;width:597px;background-position:0px 0;--c:#a0a0a0"></div>
<div class="hd" style="left:955px;top:1241px;width:597px;background-position:0px 0;--c:#a0a0a0"></div>
<div class="hd" style="left:955px;top:1281px;width:597px;background-position:0px 0;--c:#a0a0a0"></div>
<div class="hd" style="left:955px;top:1321px;width:597px;background-position:0px 0;--c:#a0a0a0"></div>
<div class="hd" style="left:955px;top:1361px;width:597px;background-position:0px 0;--c:#a0a0a0"></div>
<div class="hd" style="left:955px;top:1401px;width:597px;background-position:0px 0;--c:#a0a0a0"></div>
<div class="hd" style="left:955px;top:1441px;width:597px;background-position:0px 0;--c:#a0a0a0"></div>
<div class="vd" style="left:1254px;top:181px;height:1262px;background-position:0 -1px;--c:#a0a0a0"></div>
<div class="vd" style="left:974px;top:162px;height:1281px;background-position:0 0px;--c:#888888"></div>
<div class="vd" style="left:1001px;top:162px;height:660px;background-position:0 -1px;--c:#888888"></div>
<div class="vd" style="left:1028px;top:482px;height:260px;background-position:0 0px;--c:#888888"></div>
<div class="vd" style="left:1001px;top:1122px;height:20px;background-position:0 -1px;--c:#888888"></div>
<div class="hd" style="left:1002px;top:181px;width:19px;background-position:-1px 0;--c:#888888"></div>
<div class="hd" style="left:1002px;top:221px;width:19px;background-position:-1px 0;--c:#888888"></div>
<div class="hd" style="left:1002px;top:261px;width:19px;background-position:-1px 0;--c:#888888"></div>
<div class="hd" style="left:1002px;top:301px;width:19px;background-position:-1px 0;--c:#888888"></div>
<div class="hd" style="left:1002px;top:341px;width:19px;background-position:-1px 0;--c:#888888"></div>
<div class="hd" style="left:1002px;top:381px;width:19px;background-position:-1px 0;--c:#888888"></div>
<div class="hd" style="left:1002px;top:421px;width:19px;background-position:-1px 0;--c:#888888"></div>
<div class="hd" style="left:1002px;top:461px;width:19px;background-position:-1px 0;--c:#888888"></div>
<div class="hd" style="left:1029px;top:501px;width:19px;background-position:0px 0;--c:#888888"></div>
<div class="hd" style="left:1029px;top:541px;width:19px;background-position:0px 0;--c:#888888"></div>
<div class="hd" style="left:1029px;top:581px;width:19px;background-position:0px 0;--c:#888888"></div>
<div class="hd" style="left:1029px;top:621px;width:19px;background-position:0px 0;--c:#888888"></div>
<div class="hd" style="left:1029px;top:661px;width:19px;background-position:0px 0;--c:#888888"></div>
<div class="hd" style="left:1029px;top:701px;width:19px;background-position:0px 0;--c:#888888"></div>
<div class="hd" style="left:1029px;top:741px;width:19px;background-position:0px 0;--c:#888888"></div>
<div class="hd" style="left:1002px;top:781px;width:19px;background-position:-1px 0;--c:#888888"></div>
<div class="hd" style="left:1002px;top:821px;width:19px;background-position:-1px 0;--c:#888888"></div>
<div class="hd" style="left:975px;top:861px;width:19px;background-position:0px 0;--c:#888888"></div>
<div class="hd" style="left:975px;top:901px;width:19px;background-position:0px 0;--c:#888888"></div>
<div class="hd" style="left:975px;top:941px;width:19px;background-position:0px 0;--c:#888888"></div>
<div class="hd" style="left:975px;top:981px;width:19px;background-position:0px 0;--c:#888888"></div>
<div class="hd" style="left:975px;top:1021px;width:19px;background-position:0px 0;--c:#888888"></div>
<div class="hd" style="left:975px;top:1061px;width:19px;background-position:0px 0;--c:#888888"></div>
<div class="hd" style="left:975px;top:1101px;width:19px;background-position:0px 0;--c:#888888"></div>
<div class="hd" style="left:1002px;top:1141px;width:19px;background-position:-1px 0;--c:#888888"></div>
<div class="hd" style="left:975px;top:1181px;width:19px;background-position:0px 0;--c:#888888"></div>
<div class="hd" style="left:975px;top:1221px;width:19px;background-position:0px 0;--c:#888888"></div>
<div class="hd" style="left:975px;top:1261px;width:19px;background-position:0px 0;--c:#888888"></div>
<div class="hd" style="left:975px;top:1301px;width:19px;background-position:0px 0;--c:#888888"></div>
<div class="hd" style="left:975px;top:1341px;width:19px;background-position:0px 0;--c:#888888"></div>
<div class="hd" style="left:975px;top:1381px;width:19px;background-position:0px 0;--c:#888888"></div>
<div class="hd" style="left:975px;top:1421px;width:19px;background-position:0px 0;--c:#888888"></div>
<div style="position:absolute;left:996px;top:455px;width:13px;height:13px;box-sizing:border-box;border:1px solid #8a8a8a;border-radius:2px;background:linear-gradient(#fbfbfb 50%,#e4e4e4 50%);"></div>
<div style="position:absolute;left:998px;top:461px;width:9px;height:1px;background:#3c5aa0;"></div>
<div style="position:absolute;left:969px;top:1095px;width:13px;height:13px;box-sizing:border-box;border:1px solid #8a8a8a;border-radius:2px;background:linear-gradient(#fbfbfb 50%,#e4e4e4 50%);"></div>
<div style="position:absolute;left:971px;top:1101px;width:9px;height:1px;background:#3c5aa0;"></div>
</div></div>
</body></html>
